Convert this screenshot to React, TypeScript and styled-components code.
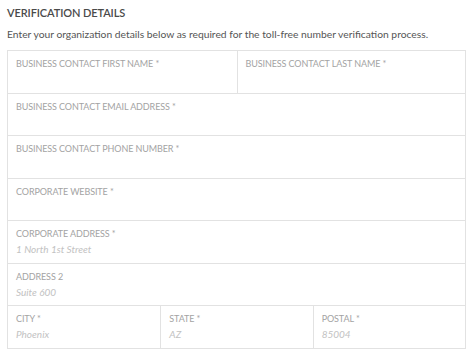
import { createGlobalStyle } from 'styled-components';
import styled from 'styled-components';

const GlobalStyle = createGlobalStyle`
  html, body {
    margin: 0;
    padding: 0;
    background: #ffffff;
  }
  body {
    font-family: Lato, "Liberation Sans", sans-serif;
  }
`;

const Page = styled.div`
  padding: 6px 8px 0 7px;
  width: 474px;
  box-sizing: border-box;
`;

const Title = styled.h2`
  margin: 0;
  font-size: 11px;
  line-height: 13px;
  font-weight: 600;
  color: #4a4a4a;
  letter-spacing: -0.1px;
`;

const Intro = styled.p`
  margin: 8px 0 9px;
  font-size: 10.3px;
  line-height: 14px;
  color: #555555;
`;

const Form = styled.div`
  border: 1px solid #e2e2e2;
  width: 459px;
  box-sizing: border-box;
`;

const Row = styled.div<{ $cols: number }>`
  display: grid;
  grid-template-columns: repeat(${(p) => p.$cols}, 1fr);
  & + & {
    border-top: 1px solid #e2e2e2;
  }
`;

const Field = styled.div`
  height: 41.5px;
  padding: 7px 8px 0;
  box-sizing: border-box;
  & + & {
    border-left: 1px solid #e2e2e2;
  }
`;

const Label = styled.div`
  font-size: 9px;
  line-height: 12px;
  color: #a3a3a3;
  text-transform: uppercase;
  letter-spacing: -0.1px;
`;

const Value = styled.div`
  margin-top: 3px;
  font-size: 10px;
  line-height: 13px;
  font-style: italic;
  color: #c2c2c2;
`;

type FieldDef = { label: string; value?: string };

const rows: FieldDef[][] = [
  [{ label: 'Business Contact First Name *' }, { label: 'Business Contact Last Name *' }],
  [{ label: 'Business Contact Email Address *' }],
  [{ label: 'Business Contact Phone Number *' }],
  [{ label: 'Corporate Website *' }],
  [{ label: 'Corporate Address *', value: '1 North 1st Street' }],
  [{ label: 'Address 2', value: 'Suite 600' }],
  [
    { label: 'City *', value: 'Phoenix' },
    { label: 'State *', value: 'AZ' },
    { label: 'Postal *', value: '85004' },
  ],
];

export default function App() {
  return (
    <>
      <GlobalStyle />
      <Page>
        <Title>VERIFICATION DETAILS</Title>
        <Intro>
          Enter your organization details below as required for the toll-free number verification process.
        </Intro>
        <Form>
          {rows.map((row, i) => (
            <Row key={i} $cols={row.length}>
              {row.map((f) => (
                <Field key={f.label}>
                  <Label>{f.label}</Label>
                  {f.value && <Value>{f.value}</Value>}
                </Field>
              ))}
            </Row>
          ))}
        </Form>
      </Page>
    </>
  );
}
